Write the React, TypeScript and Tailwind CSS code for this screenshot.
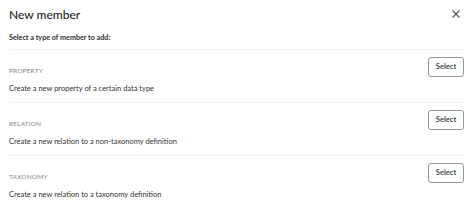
import React from 'react';

const members = [
  { label: 'Property', description: 'Create a new property of a certain data type' },
  { label: 'Relation', description: 'Create a new relation to a non-taxonomy definition' },
  { label: 'Taxonomy', description: 'Create a new relation to a taxonomy definition' },
];

export default function App() {
  return (
    <div className="w-[474px] h-[210px] bg-white overflow-hidden font-['Lato',sans-serif] text-[#2b2f33]">
      <div className="flex items-center justify-between pl-[9px] pr-[14px] pt-[2px] h-[28px]">
        <h2 className="text-[12px] font-medium text-[#1f1f1f]">New member</h2>
        <button className="text-[#555] -mt-[3px]">
          <svg width="8" height="8" viewBox="0 0 8 8" fill="none" stroke="currentColor" strokeWidth="1.1">
            <path d="M0.5 0.5L7.5 7.5M7.5 0.5L0.5 7.5" />
          </svg>
        </button>
      </div>
      <div className="pl-[9px] pr-[10px]">
        <p className="text-[7.2px] font-bold h-[21px] flex items-center">Select a type of member to add:</p>
        <div>
          {members.map((m) => (
            <div key={m.label} className="flex justify-between border-t border-[#f0f0f0] h-[53px]">
              <div>
                <div className="mt-[16px] text-[6.5px] uppercase tracking-wide text-[#888]">{m.label}</div>
                <div className="mt-[7px] text-[7.5px] text-[#333]">{m.description}</div>
              </div>
              <button className="mt-[7px] w-[36px] h-[20px] border border-[#8d9aa3] rounded-[3px] text-[7.5px] font-bold text-[#3b4a55]">
                Select
              </button>
            </div>
          ))}
        </div>
      </div>
    </div>
  );
}
